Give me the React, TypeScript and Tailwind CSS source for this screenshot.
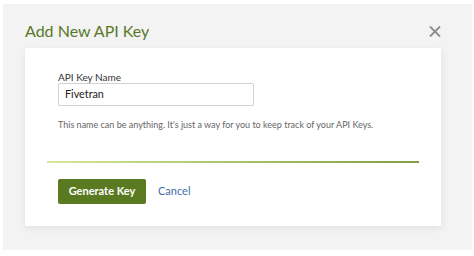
import React from 'react';

export default function App() {
    return (
        <div className="w-[474px] h-[256px] bg-white pl-[3px] pt-[4px] font-['Lato','Noto_Sans',sans-serif]">
            <div className="w-[469px] h-[246px] bg-[#f3f3f3] pl-[22px] pr-[31px] pt-[10px]">
                {/* Header */}
                <div className="flex items-center justify-between h-[34px]">
                    <h1 className="text-[16px] text-[#587829] leading-none">Add New API Key</h1>
                    <button className="text-[#8a8a8a] mr-[0px]">
                        <svg width="12" height="11" viewBox="0 0 12 11" fill="none" stroke="currentColor" strokeWidth="1.8">
                            <path d="M1 0.5 L11 10.5 M11 0.5 L1 10.5" />
                        </svg>
                    </button>
                </div>

                {/* Card */}
                <div className="bg-white shadow-[0_2px_8px_rgba(0,0,0,0.08)] pt-[23px] px-[22px] h-[178px]">
                    <div className="pl-[11px]">
                        <label className="block text-[10px] text-[#333] leading-[12px]">API Key Name</label>
                        <div className="w-[196px] h-[23px] border border-[#d2d2d2] rounded-[2px] flex items-center px-[6px] text-[10.8px] text-[#222]">
                            Fivetran
                        </div>
                        <p className="mt-[13px] text-[9px] text-[#666] leading-[12px]">
                            This name can be anything. It's just a way for you to keep track of your API Keys.
                        </p>
                    </div>
                    <div className="mt-[30px] h-[2px] bg-gradient-to-r from-[#d6e89a] to-[#809f3e]" />
                    <div className="pl-[11px] mt-[16px] flex items-center gap-[12px]">
                        <button className="h-[25px] w-[88px] bg-[#5a7a22] rounded-[2px] text-white font-bold text-[11px]">
                            Generate Key
                        </button>
                        <button className="text-[#3f6ea6] text-[11px]">Cancel</button>
                    </div>
                </div>
            </div>
        </div>
    );
}
